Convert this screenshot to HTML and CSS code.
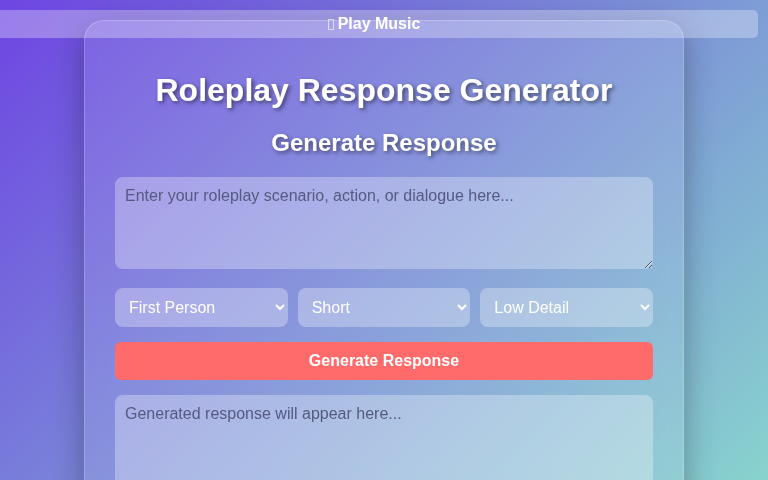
FILE: index.html
```html
<!DOCTYPE html>
<html lang="en">
<head>
  <meta charset="UTF-8">
  <meta name="viewport" content="width=device-width, initial-scale=1.0">
  <title>Roleplay Response Generator</title>
  <link rel="stylesheet" href="styles.css">
</head>
<body>

<button class="music-btn" id="music-btn"><span class="tofu"></span>Play Music</button>

<div class="container">
  <h1>Roleplay Response Generator</h1>
  <h2>Generate Response</h2>

  <textarea id="scenario" placeholder="Enter your roleplay scenario, action, or dialogue here..."></textarea>

  <div class="options">
    <select id="perspective">
      <option>First Person</option>
      <option>Third Person</option>
    </select>
    <select id="length">
      <option>Short</option>
      <option>Medium</option>
      <option>Long</option>
    </select>
    <select id="detail">
      <option>Low Detail</option>
      <option>Medium Detail</option>
      <option>High Detail</option>
    </select>
  </div>

  <button class="generate-btn">Generate Response</button>

  <textarea class="output" id="output" placeholder="Generated response will appear here..." readonly></textarea>
</div>

</body>
</html>
```

FILE: styles.css
```css
* {
  box-sizing: border-box;
}

html {
  height: 100%;
  overflow: hidden;
}

body {
  font-family: "Liberation Sans", Arial, sans-serif;
  background: linear-gradient(135deg, #6e45e2, #88d3ce);
  color: white;
  margin: 0;
  height: 100vh;
}

.music-btn {
  position: absolute;
  top: 10px;
  right: 10px;
  z-index: 10;
  width: 100%;
  height: 28px;
  padding: 0;
  border: none;
  border-radius: 5px;
  background: rgba(255, 255, 255, 0.3);
  color: white;
  font-family: inherit;
  font-size: 16px;
  font-weight: bold;
  cursor: pointer;
  will-change: transform;
}

.tofu {
  display: inline-block;
  width: 6px;
  height: 11px;
  margin-right: 4px;
  border: 1px solid rgba(255, 255, 255, 0.6);
  vertical-align: -1px;
}

.container {
  width: 600px;
  margin: 20px auto;
  padding: 30px;
  background: rgba(255, 255, 255, 0.1);
  border: 1px solid rgba(255, 255, 255, 0.2);
  border-radius: 20px;
  box-shadow: 0 8px 32px rgba(0, 0, 0, 0.3);
  backdrop-filter: blur(10px);
  will-change: transform;
}

h1, h2 {
  text-align: center;
  text-shadow: 2px 2px 4px rgba(0, 0, 0, 0.5);
}

h1 {
  font-size: 32px;
  margin: 21px 0 20px;
}

h2 {
  font-size: 24px;
  margin: 0 0 20px;
}

textarea, select {
  font-family: inherit;
  font-size: 16px;
  border: none;
  border-radius: 8px;
  background: rgba(255, 255, 255, 0.3);
}

textarea {
  display: block;
  width: 100%;
  height: 92px;
  padding: 10px;
  color: white;
}

textarea::placeholder {
  color: #555a80;
}

.options {
  display: flex;
  gap: 10px;
  margin: 19px 0 15px;
}

select {
  flex: 1;
  min-width: 0;
  height: 39px;
  padding: 10px;
  color: white;
}

.generate-btn {
  display: block;
  width: 100%;
  height: 38px;
  border: none;
  border-radius: 6px;
  background: #ff6b6b;
  color: white;
  font-family: inherit;
  font-size: 16px;
  font-weight: bold;
  cursor: pointer;
  margin-bottom: 15px;
}

.output {
  height: 200px;
}
```
